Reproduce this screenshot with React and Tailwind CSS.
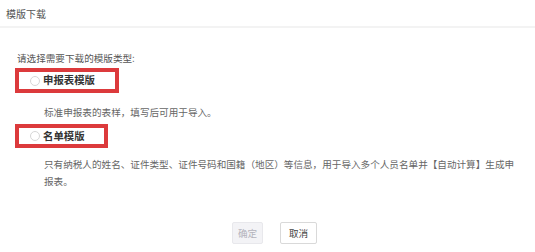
import React, { useState } from 'react';

const CJK = { fontFamily: '"Noto Sans CJK SC", "Noto Sans", sans-serif' };

const OptionBox = ({ label, width, height, checked, onSelect }) => (
  <button
    type="button"
    onClick={onSelect}
    className={`flex items-center border-[4px] border-[#dc3a3c] bg-white pl-[11px] ${width} ${height}`}
  >
    {/* radio */}
    <span className="flex h-[10px] w-[10px] items-center justify-center rounded-full border border-[#d6d6d6] bg-white">
      {checked && <span className="h-[4px] w-[4px] rounded-full bg-[#3a7bf0]" />}
    </span>
    <span className="ml-[3px] text-[10.4px] font-bold leading-none text-[#333]">{label}</span>
  </button>
);

const App = () => {
  const [type, setType] = useState(null);

  return (
    <div className="flex h-[252px] w-[535px] flex-col bg-white" style={CJK}>
      {/* header */}
      <div className="flex h-[26px] items-center pl-[6px] text-[10px] text-[#555]">模版下载</div>
      <div className="h-[2px] bg-[#f3f3f3]" />

      {/* body */}
      <div className="flex flex-col pl-[15px]">
        <div className="mt-[24px] ml-[2px] text-[9.6px] leading-[12px] text-[#555]">请选择需要下载的模版类型:</div>

        <div className="mt-[4px]">
          <OptionBox
            label="申报表模版"
            width="w-[104px]"
            height="h-[25px]"
            checked={type === 'report'}
            onSelect={() => setType('report')}
          />
        </div>
        <div className="mt-[13px] ml-[29px] text-[9.6px] leading-[12px] text-[#666]">
          标准申报表的表样，填写后可用于导入。
        </div>

        <div className="mt-[6px]">
          <OptionBox
            label="名单模版"
            width="w-[93px]"
            height="h-[24px]"
            checked={type === 'list'}
            onSelect={() => setType('list')}
          />
        </div>
        <div className="mt-[8px] ml-[29px] text-[9.6px] leading-[17px] text-[#666]">
          只有纳税人的姓名、证件类型、证件号码和国籍（地区）等信息，用于导入多个人员名单并【自动计算】生成申
          <br />
          报表。
        </div>
      </div>

      {/* footer buttons */}
      <div className="mt-[32px] flex gap-[17px] pl-[232px]">
        <button
          type="button"
          disabled={!type}
          className="h-[22px] w-[31px] rounded-[2px] border border-[#e8e8ec] bg-[#f3f3f6] text-[9.6px] text-[#b4b4bc]"
        >
          确定
        </button>
        <button
          type="button"
          className="h-[22px] w-[37px] rounded-[2px] border border-[#d9d9d9] bg-white text-[9.6px] text-[#444]"
        >
          取消
        </button>
      </div>
    </div>
  );
};

export default App;
